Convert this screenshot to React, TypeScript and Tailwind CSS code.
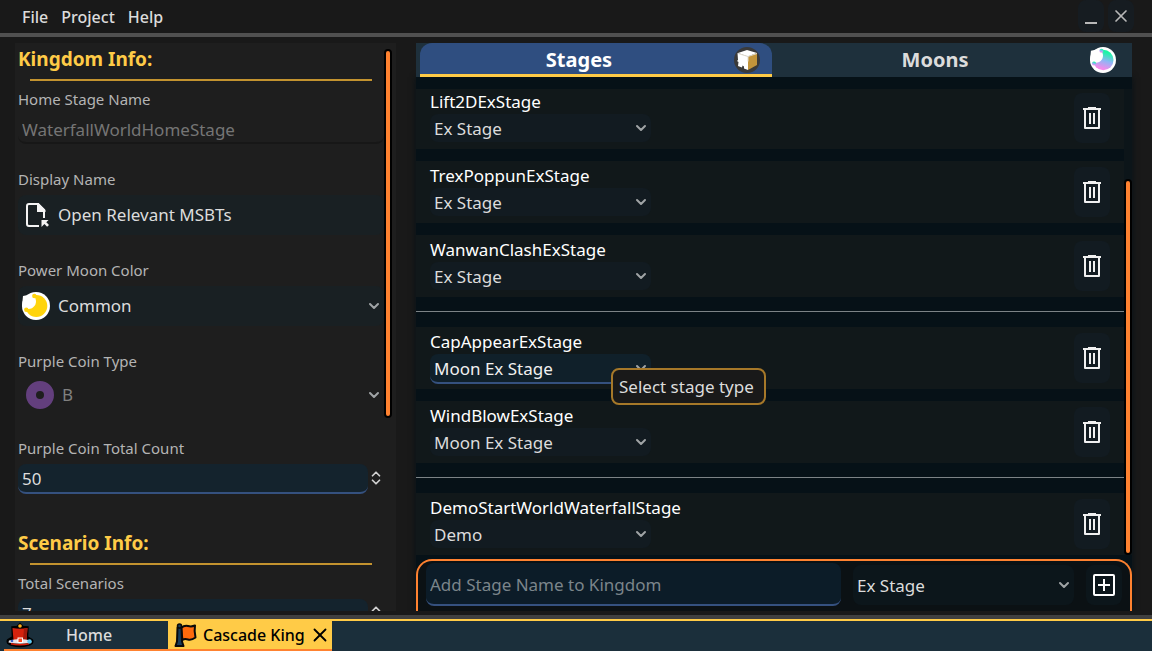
import React, { useState } from 'react';
import { ChevronDown, ChevronUp, X } from 'lucide-react';

type StageType = 'Ex Stage' | 'Moon Ex Stage' | 'Demo';

interface Stage {
  name: string;
  type: StageType;
  focused?: boolean;
}

const stageTypes: StageType[] = ['Ex Stage', 'Moon Ex Stage', 'Demo'];

const stageGroups: Stage[][] = [
  [
    { name: 'Lift2DExStage', type: 'Ex Stage' },
    { name: 'TrexPoppunExStage', type: 'Ex Stage' },
    { name: 'WanwanClashExStage', type: 'Ex Stage' },
  ],
  [
    { name: 'CapAppearExStage', type: 'Moon Ex Stage', focused: true },
    { name: 'WindBlowExStage', type: 'Moon Ex Stage' },
  ],
  [{ name: 'DemoStartWorldWaterfallStage', type: 'Demo' }],
];

/* Icons */

const TrashIcon = () => (
  <svg width="20" height="22" viewBox="0 0 20 22" fill="none" stroke="#f0f0f0" strokeWidth="2">
    <path d="M1 2h18M6 1h8M3 3v18h14V3M8 6v11M12 6v11" strokeLinejoin="round" />
  </svg>
);

const AddIcon = () => (
  <svg width="22" height="22" viewBox="0 0 22 22" fill="none" stroke="#fff" strokeWidth="2">
    <rect x="1" y="1" width="20" height="20" rx="1" />
    <path d="M11 5v12M5 11h12" />
  </svg>
);

const OpenFileIcon = () => (
  <svg width="23" height="25" viewBox="0 0 23 25" fill="none">
    <path d="M13 23H3a2 2 0 0 1-2-2V3a2 2 0 0 1 2-2h9l6 6v8" stroke="#f4f4f4" strokeWidth="2" />
    <path d="M11 0h1.500l7 7v2H11z" fill="#f4f4f4" />
    <path d="M15.500 17h7l-2.200 2.200 2.700 2.700-1.900 1.900-2.700-2.700L15.500 24z" fill="#f4f4f4" />
  </svg>
);

const MoonIcon = ({ size, fill }: { size: number; fill: string }) => (
  <svg width={size} height={size} viewBox="0 0 28 28" className="shrink-0">
    <defs>
      <linearGradient id="rainbow" x1="0.6" y1="0" x2="0.3" y2="1">
        <stop offset="0.1" stopColor="#1cf5a5" />
        <stop offset="0.5" stopColor="#8fb5f5" />
        <stop offset="0.9" stopColor="#f58aea" />
      </linearGradient>
    </defs>
    <circle cx="14" cy="14" r="14" fill="#fff" />
    <circle cx="14.300" cy="14" r="11" fill={fill} />
    <path d="M1 4L11 2C14 6 15 10 12.800 13.500C10.500 17 7 17.500 3 16.500L0 14z" fill="#fff" />
    <circle cx="12.300" cy="4" r="2.200" fill={fill} />
    <circle cx="4.300" cy="17.800" r="2.200" fill={fill} />
  </svg>
);

const CubeIcon = () => (
  <svg width="26" height="26" viewBox="0 0 26 26">
    <circle cx="13" cy="13" r="13" fill="#3a3a3a" />
    <path d="M4 6L13 3l10 3-9 3.500z" fill="#fff" />
    <path d="M3.500 6L14 9.500v13.500l-4-1.500v-2l-1.500-1-.5 2-4-1.500.5-4-1.500-1 1-1z" fill="#fff" />
    <path d="M14 9.500L23 6v12l-9 5z" fill="#c3953b" />
    <path d="M4 6.500L14 9.500 23 6.500M14 9.500v5" stroke="#e0dcd2" strokeWidth="1" fill="none" />
  </svg>
);

const CoinIcon = () => (
  <svg width="28" height="28" viewBox="0 0 28 28">
    <circle cx="14" cy="14" r="9" fill="none" stroke="#633f7d" strokeWidth="10" />
  </svg>
);

const HatIcon = () => (
  <svg width="28" height="26" viewBox="0 0 28 26">
    <path
      d="M6 5l5-.5L14 1.500l3 3 5 .5-.5 10 4.500 2.500q1.500 1.500 0 4Q22 24.500 14 24.500T2 21.500q-1.500-2.500 0-4L6.500 15z"
      fill="#000"
      stroke="#000"
      strokeWidth="1.500"
    />
    <path d="M6.500 6q7.500 1.500 15 0L20.500 18h-13z" fill="#d4230e" />
    <path d="M18 6.500l3.500-.5-1 12H17z" fill="#a01a0c" />
    <path d="M3 18.500q11-3 22 0l.5 2Q14 23 2.500 20.500z" fill="#e9e4ea" />
    <path d="M5 21.700q9 2 18 0" stroke="#d81e0a" strokeWidth="1.500" fill="none" />
    <rect x="12" y="16" width="4.500" height="4.500" fill="#ff4a22" stroke="#fff" />
    <circle cx="14" cy="4" r="1.800" fill="#ffb21c" />
    <circle cx="23.500" cy="19.500" r="2.200" fill="#59c7f2" />
    <circle cx="6" cy="19" r="1.300" fill="#3d62c8" />
  </svg>
);

const FlagIcon = () => (
  <svg width="23" height="25" viewBox="0 0 23 25" strokeLinejoin="round">
    <path d="M7 5q3.500-3 7-2t7-.5q-1 5.500.5 12-4 3-7.500 2t-5.500.5z" fill="#ff6a0d" stroke="#0a0a0a" strokeWidth="2" />
    <path d="M3.500 4.500h4l.5 14 1.500 4.500h-8L3 18.500z" fill="#173c5c" stroke="#0a0a0a" strokeWidth="2" />
    <circle cx="5.500" cy="3" r="2" fill="#173c5c" stroke="#0a0a0a" strokeWidth="1.500" />
  </svg>
);

/* Shared controls */

interface DropdownProps {
  id?: string;
  label?: string;
  value: string;
  options: string[];
  className: string;
  disabled?: boolean;
  icon?: React.ReactNode;
}

const Dropdown: React.FC<DropdownProps> = ({ id, label, value, options, className, disabled, icon }) => (
  <div className={`relative flex items-center ${className}`}>
    {icon && <span className="pointer-events-none absolute left-1">{icon}</span>}
    <select
      id={id}
      aria-label={label}
      defaultValue={value}
      disabled={disabled}
      className={`h-full w-full appearance-none bg-transparent outline-none ${icon ? 'pl-10' : 'pt-0.5 pl-1'} ${
        disabled ? 'text-[#808080]' : ''
      }`}
    >
      {options.map((option) => (
        <option key={option}>{option}</option>
      ))}
    </select>
    <ChevronDown size={16} strokeWidth={3} className="pointer-events-none absolute right-0.5 text-[#a0a4a6]" />
  </div>
);

const NumberField = ({ id, value }: { id: string; value: string }) => (
  <div className="flex h-[30px]">
    <input
      id={id}
      type="text"
      inputMode="numeric"
      defaultValue={value}
      className="h-full min-w-0 flex-1 rounded-lg border-b-2 border-[#35517f] bg-[#14232d] px-1 outline-none"
    />
    <div className="flex w-4 flex-col items-center justify-center text-[#d0d0d0]">
      <button aria-label="Increase" className="h-2">
        <ChevronUp size={14} strokeWidth={3} className="-mt-1" />
      </button>
      <button aria-label="Decrease" className="h-2">
        <ChevronDown size={14} strokeWidth={3} className="-mt-1" />
      </button>
    </div>
  </div>
);

const SectionTitle = ({ children }: { children: React.ReactNode }) => (
  <div className="mb-[7px]">
    <h2 className="text-[19px] leading-8 font-bold text-[#ffcb47]">{children}</h2>
    <div className="mx-3 mt-1 h-0.5 bg-[#c3932f]" />
  </div>
);

const Field = ({ id, label, children }: { id: string; label: string; children: React.ReactNode }) => (
  <div className="mb-6">
    <label htmlFor={id} className="mb-[5px] block text-[15px] leading-[22px] text-[#b4b4b4]">
      {label}
    </label>
    {children}
  </div>
);

/* Panels */

const Sidebar = () => (
  <aside className="flex w-[381px] shrink-0 overflow-hidden bg-[#1e1e1e] pr-1 pl-[3px]">
    <div className="min-w-0 flex-1">
      <SectionTitle>Kingdom Info:</SectionTitle>
      <Field id="home-stage" label="Home Stage Name">
        <input
          id="home-stage"
          type="text"
          disabled
          defaultValue="WaterfallWorldHomeStage"
          className="block h-[29px] w-full rounded-lg border-b-2 border-[#171717] px-1 pt-0.5 text-[#757575]"
        />
      </Field>
      <Field id="open-msbt" label="Display Name">
        <button id="open-msbt" className="flex h-10 w-full items-center gap-[9px] rounded-lg bg-[#192023] pl-2">
          <OpenFileIcon />
          Open Relevant MSBTs
        </button>
      </Field>
      <Field id="moon-color" label="Power Moon Color">
        <Dropdown
          id="moon-color"
          value="Common"
          options={['Common', 'Rainbow']}
          className="h-10 rounded-lg bg-[#192023]"
          icon={<MoonIcon size={28} fill="#ffd40c" />}
        />
      </Field>
      <Field id="coin-type" label="Purple Coin Type">
        <div className="pl-1">
          <Dropdown id="coin-type" value="B" options={['A', 'B']} className="h-9" disabled icon={<CoinIcon />} />
        </div>
      </Field>
      <Field id="coin-count" label="Purple Coin Total Count">
        <NumberField id="coin-count" value="50" />
      </Field>
      <div className="pt-[9px]">
        <SectionTitle>Scenario Info:</SectionTitle>
      </div>
      <Field id="scenarios" label="Total Scenarios">
        <NumberField id="scenarios" value="7" />
      </Field>
    </div>
    <div className="mt-1.5 h-[369px] w-2 rounded-full border-2 border-black bg-[#ff8230]" />
  </aside>
);

const StageRow = ({ stage }: { stage: Stage }) => (
  <li className="flex h-[62px] items-center justify-between bg-[#11181a] px-3.5">
    <div className="h-full w-[221px] pt-1">
      <p className="mb-0.5 leading-[21px] whitespace-nowrap text-white">{stage.name}</p>
      <div className="relative">
        <Dropdown
          label={`${stage.name} type`}
          value={stage.type}
          options={stageTypes}
          className={
            stage.focused
              ? 'h-[30px] rounded-lg border-b-2 border-[#35517f] bg-[#10202a] text-[#f0f0f0]'
              : 'h-7 rounded-lg bg-[#121b21]'
          }
        />
        {stage.focused && (
          <div
            role="tooltip"
            className="absolute top-[14px] left-[181px] z-10 min-w-[155px] rounded-lg border-2 border-[#a67829] bg-[#191919] px-1.5 leading-[33px] whitespace-nowrap"
          >
            Select stage type
          </div>
        )}
      </div>
    </div>
    <button aria-label={`Remove ${stage.name}`} className="flex h-[50px] w-9 items-center justify-center rounded-lg bg-[#121b21]">
      <TrashIcon />
    </button>
  </li>
);

const StagesPanel = () => {
  const [tab, setTab] = useState('stages');

  return (
    <section className="flex min-w-0 flex-1 flex-col">
      {/* z-10 keeps the body's shadow from darkening the tab underline */}
      <div role="tablist" className="relative z-10 flex h-[34px] bg-[#1e303c] pr-2 pl-1 text-[20px] font-bold">
        <button
          role="tab"
          aria-selected={tab === 'stages'}
          onClick={() => setTab('stages')}
          className="flex flex-1 items-center rounded-t-xl bg-[#2f4e80] pr-3 pl-1 text-white shadow-[inset_0_-3px_#ffcb47]"
        >
          <span className="flex-1">Stages</span>
          <CubeIcon />
        </button>
        <button
          role="tab"
          aria-selected={tab === 'moons'}
          onClick={() => setTab('moons')}
          className="flex flex-1 items-center pr-2 pl-2"
        >
          <span className="flex-1">Moons</span>
          <MoonIcon size={26} fill="url(#rainbow)" />
        </button>
      </div>

      <div className="relative flex min-h-0 flex-1 flex-col bg-[#061117] pt-3 shadow-[0_0_6px_#061117]">
        <div className="flex min-h-0 flex-1 overflow-hidden pb-1">
          <div className="min-w-0 flex-1">
            {stageGroups.map((group, i) => (
              <React.Fragment key={i}>
                {i > 0 && <hr className="mt-3.5 mb-[15px] border-[#7c8386]" />}
                <ul className={`flex flex-col gap-3 ${i === 0 ? '-mt-0.5' : ''}`}>
                  {group.map((stage) => (
                    <StageRow key={stage.name} stage={stage} />
                  ))}
                </ul>
              </React.Fragment>
            ))}
          </div>
          <div className="flex w-2 flex-col bg-[#0c1519] pt-[90px]">
            <div className="flex-1 rounded-full border-2 border-black bg-[#ff8230]" />
          </div>
        </div>

        <form
          onSubmit={(e) => e.preventDefault()}
          className="flex h-[52px] items-start gap-3 rounded-t-2xl border-x-2 border-t-2 border-[#ff8230] bg-[#0b1114] px-2 pt-0.5"
        >
          <input
            type="text"
            aria-label="Stage name"
            placeholder="Add Stage Name to Kingdom"
            className="h-[43px] min-w-0 flex-1 rounded-lg border-b-2 border-[#35517f] bg-[#0c1c28] px-1 pt-0.5 outline-none placeholder:text-[#7b858b]"
          />
          <Dropdown
            label="New stage type"
            value="Ex Stage"
            options={stageTypes}
            className="mt-0.5 h-10 w-[221px] rounded-lg bg-[#0c161b]"
          />
          <button aria-label="Add stage" className="mt-0.5 flex h-10 w-9 items-center justify-center rounded-lg bg-[#0c161b]">
            <AddIcon />
          </button>
        </form>
      </div>
    </section>
  );
};

const App: React.FC = () => (
  <div className="flex h-screen flex-col overflow-hidden bg-[#191919] font-['Noto_Sans',sans-serif] text-[17px] text-[#dcdcdc]">
    <header className="flex h-[37px] shrink-0 justify-between border-b-4 border-[#505050] pr-[18px] pl-4">
      <nav className="flex gap-px text-base font-medium">
        {['File', 'Project', 'Help'].map((item) => (
          <button key={item} className="px-1.5">
            {item}
          </button>
        ))}
      </nav>
      <div className="flex gap-1 text-[#b8b8b8]">
        <button aria-label="Minimize" className="flex h-8 w-[26px] items-end justify-center rounded-lg bg-[#161c21] pb-2">
          <span className="h-0.5 w-3 bg-[#b8b8b8]" />
        </button>
        <button aria-label="Close" className="flex h-8 w-[26px] items-center justify-center rounded-lg bg-[#161c21]">
          <X size={20} strokeWidth={2} />
        </button>
      </div>
    </header>

    <main className="mb-1 flex min-h-0 flex-1 gap-5 overflow-hidden pt-1.5 pr-5 pl-[15px]">
      <Sidebar />
      <StagesPanel />
    </main>

    <footer className="shrink-0 border-t-4 border-[#404040]">
      <div className="flex h-8 border-t-2 border-[#ffcb47] bg-[#1b2f3b] pl-1 text-base font-medium">
        <button className="flex w-[164px] items-center border-b-2 border-[#ff8230] pl-0.5">
          <HatIcon />
          <span className="pl-8">Home</span>
        </button>
        <div className="flex w-[164px] items-center border-b-2 border-[#ff8230] bg-[#ffcb47] pl-1.5 text-black">
          <button className="flex items-center gap-1.5 whitespace-nowrap">
            <FlagIcon />
            Cascade King
          </button>
          <button aria-label="Close Cascade Kingdom" className="ml-1">
            <X size={22} strokeWidth={2} />
          </button>
        </div>
      </div>
    </footer>
  </div>
);

export default App;
